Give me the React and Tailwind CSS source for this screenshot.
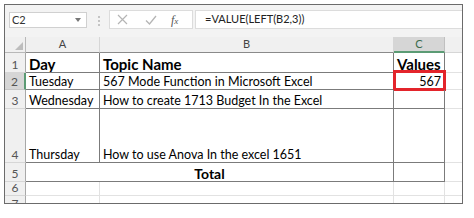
import React from 'react';

const DARK = 'border-[#7b7b7b]';

const RowHead = ({ n, active, className = '' }) => (
  <div
    className={`flex items-end justify-center border-b border-r text-[12px] leading-[15px] text-[#555] ${
      active ? 'bg-[#d6d6d6] border-r-2 border-r-[#5b9b74] border-b-[#c6c6c6]' : 'bg-[#f0f0f0] border-r-[#a8a8a8] border-b-[#d6d6d6]'
    } ${className}`}
  >
    {n}
  </div>
);

const Cell = ({ children, className = '' }) => (
  <div className={`relative flex items-end overflow-hidden whitespace-nowrap border-b border-r ${DARK} px-[3px] text-[12.5px] leading-[15px] text-black ${className}`}>
    {children}
  </div>
);

const Blank = ({ className = '' }) => <div className={`border-b border-[#e2e2e2] ${className}`} />;

const App = () => {
  return (
    <div className="bg-white pl-[4px] pt-[4px] w-[474px] h-[218px]" style={{ fontFamily: 'Lato, "Liberation Sans", sans-serif' }}>
      <div className="flex h-[200px] w-[459px] flex-col overflow-hidden border border-[#6b6b6b] bg-white">
        {/* formula bar */}
        <div className="flex h-[32px] shrink-0 items-start bg-[#f3f3f3]">
          <div className="ml-[4px] mt-[7px] flex h-[16px] w-[78px] items-center justify-between border border-[#d0d0d0] bg-white pl-[2px] pr-[5px] text-[11px] text-[#333]">
            <span>C2</span>
            <svg width="6" height="4" viewBox="0 0 6 4">
              <path d="M0 0 L6 0 L3 4 Z" fill="#777" />
            </svg>
          </div>
          <div className="ml-[11px] mt-[11px] flex flex-col gap-[2px]">
            <span className="block h-[2px] w-[2px] bg-[#c4c4c4]" />
            <span className="block h-[2px] w-[2px] bg-[#c4c4c4]" />
            <span className="block h-[2px] w-[2px] bg-[#c4c4c4]" />
          </div>
          <div className="ml-[9px] mt-[5px] flex h-[19px] w-[84px] items-center border border-[#dcdcdc] bg-white">
            <svg className="ml-[7px]" width="11" height="11" viewBox="0 0 11 11">
              <path d="M1 1 L10 10 M10 1 L1 10" stroke="#b5b5b5" strokeWidth="1.2" />
            </svg>
            <svg className="ml-[17px]" width="12" height="10" viewBox="0 0 12 10">
              <path d="M1 5.5 L4.5 9 L11 1" stroke="#b5b5b5" strokeWidth="1.3" fill="none" />
            </svg>
            <span className="ml-[14px] text-[12px] italic text-[#555]" style={{ fontFamily: '"Liberation Serif", serif' }}>
              f<span className="text-[9px]">x</span>
            </span>
          </div>
          <div className="ml-[2px] mt-[5px] flex h-[19px] flex-1 items-center border border-r-0 border-[#dcdcdc] bg-white pl-[9px] text-[11px] text-[#222]">
            =VALUE(LEFT(B2,3))
          </div>
        </div>

        {/* sheet */}
        <div className="grid flex-1 grid-cols-[21px_74px_294px_51px_17px] grid-rows-[16px_20px_17px_19px_54px_19px_14px_7px] overflow-hidden">
          {/* header row */}
          <div className="relative border-b border-r border-[#b8b8b8] bg-[#f0f0f0]">
            <svg className="absolute bottom-[2px] right-[2px]" width="8" height="8" viewBox="0 0 8 8">
              <path d="M8 0 L8 8 L0 8 Z" fill="#bdbdbd" />
            </svg>
          </div>
          <div className="flex items-center justify-center border-b border-r border-r-[#d6d6d6] border-b-[#8a8a8a] bg-[#f0f0f0] text-[11px] text-[#444]">A</div>
          <div className="flex items-center justify-center border-b border-r border-r-[#d6d6d6] border-b-[#8a8a8a] bg-[#f0f0f0] text-[11px] text-[#444]">B</div>
          <div className="flex items-center justify-center border-b-2 border-r border-r-[#c0c0c0] border-b-[#5b9b74] bg-[#d6d6d6] text-[11px] text-[#3a6b4c]">C</div>
          <div className="border-b border-[#d6d6d6] bg-[#f0f0f0]" />

          {/* row 1 */}
          <RowHead n="1" />
          <Cell className="text-[15px] font-bold">Day</Cell>
          <Cell className="text-[15px] font-bold">Topic Name</Cell>
          <Cell className="text-[15px] font-bold">Values</Cell>
          <Blank />

          {/* row 2 */}
          <RowHead n="2" active />
          <Cell>Tuesday</Cell>
          <Cell>567 Mode Function in Microsoft Excel</Cell>
          <Cell className="justify-end overflow-visible">
            567
            <div className="absolute -left-[1px] -top-[3px] h-[21px] w-[53px] border-[3px] border-[#e3242b]" />
          </Cell>
          <Blank />

          {/* row 3 */}
          <RowHead n="3" />
          <Cell>Wednesday</Cell>
          <Cell>How to create 1713 Budget In the Excel</Cell>
          <Cell />
          <Blank />

          {/* row 4 */}
          <RowHead n="4" />
          <Cell>Thursday</Cell>
          <Cell>How to use Anova In the excel 1651</Cell>
          <Cell />
          <Blank />

          {/* row 5 */}
          <RowHead n="5" />
          <Cell className="col-span-2 justify-center font-bold text-[14px]">Total</Cell>
          <Cell />
          <Blank />

          {/* row 6 */}
          <RowHead n="6" />
          <Blank className="border-r" />
          <Blank className="border-r" />
          <Blank className="border-r" />
          <Blank />

          {/* row 7 */}
          <div className="flex items-start justify-center overflow-hidden border-r border-r-[#a8a8a8] bg-[#f0f0f0] text-[12px] leading-[15px] text-[#555]">7</div>
          <div className="border-r border-[#e2e2e2]" />
          <div className="border-r border-[#e2e2e2]" />
          <div className="border-r border-[#e2e2e2]" />
          <div />
        </div>
      </div>
    </div>
  );
};

export default App;
